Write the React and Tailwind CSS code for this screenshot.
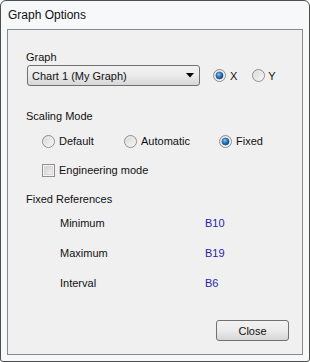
import React from "react";

function Radio({ checked }) {
  return (
    <svg width="13" height="13" viewBox="0 0 13 13" className="shrink-0">
      <defs>
        <linearGradient id="rfill" x1="0" y1="0" x2="1" y2="1">
          <stop offset="0" stopColor="#d4d4d4" />
          <stop offset="1" stopColor="#fbfbfb" />
        </linearGradient>
        <radialGradient id="rdot" cx="0.4" cy="0.35" r="0.7">
          <stop offset="0" stopColor="#8ec6f0" />
          <stop offset="0.5" stopColor="#2b78bf" />
          <stop offset="1" stopColor="#0d3f78" />
        </radialGradient>
      </defs>
      <circle cx="6.5" cy="6.5" r="6" fill="url(#rfill)" stroke="#8c8e90" strokeWidth="1" />
      <circle cx="6.5" cy="6.5" r="4.6" fill="none" stroke="#ededed" strokeWidth="0.8" />
      {checked && <circle cx="6.5" cy="6.5" r="3.6" fill="url(#rdot)" stroke="#1c4f80" strokeWidth="0.5" />}
    </svg>
  );
}

function Check() {
  return (
    <div className="w-[13px] h-[13px] shrink-0 border border-[#8e8f8f] bg-[#f4f4f4] p-[1px]">
      <div className="w-full h-full bg-gradient-to-br from-[#cfcfcf] to-[#f4f4f4] border border-[#d8d8d8]" />
    </div>
  );
}

function RadioLabel({ checked, children, gap = "gap-[4px]" }) {
  return (
    <div className={`flex items-center ${gap}`}>
      <Radio checked={checked} />
      <span>{children}</span>
    </div>
  );
}

export default function App() {
  return (
    <div
      className="w-[310px] h-[362px] bg-[#f7f8fa] border border-[#4d4d4d] rounded-t-[6px] rounded-b-[3px] flex flex-col text-[11px] text-[#111] leading-[16px]"
      style={{ fontFamily: '"Segoe UI", "Liberation Sans", Arial, sans-serif' }}
    >
      <div className="h-[28px] flex items-center pl-[7px] text-[12px]">Graph Options</div>
      <div className="mx-[6px] mb-[6px] flex-1 border border-[#878a8f] bg-[#f0f0f0] flex flex-col pl-[18px]">
        <div className="mt-[19px] h-[16px]">Graph</div>
        <div className="flex items-center h-[21px]">
          <div className="ml-[1px] w-[173px] h-[21px] border border-[#707070] rounded-[3px] bg-gradient-to-b from-[#f2f2f2] via-[#ebebeb] to-[#d6d6d6] flex items-center pl-[4px] pr-[5px] justify-between">
            <span>Chart 1 (My Graph)</span>
            <svg width="8" height="5" viewBox="0 0 8 5">
              <path d="M0 0 L8 0 L4 4.5 Z" fill="#000" />
            </svg>
          </div>
          <div className="ml-[13px]">
            <RadioLabel checked gap="gap-[4px]">X</RadioLabel>
          </div>
          <div className="ml-[15px]">
            <RadioLabel gap="gap-[3px]">Y</RadioLabel>
          </div>
        </div>
        <div className="mt-[22px] h-[16px]">Scaling Mode</div>
        <div className="mt-[9px] h-[16px] flex items-center pl-[16px]">
          <div className="w-[82px]"><RadioLabel>Default</RadioLabel></div>
          <div className="w-[95px]"><RadioLabel>Automatic</RadioLabel></div>
          <div><RadioLabel checked>Fixed</RadioLabel></div>
        </div>
        <div className="mt-[13px] h-[16px] flex items-center pl-[16px] gap-[4px]">
          <Check />
          <span>Engineering mode</span>
        </div>
        <div className="mt-[13px] h-[16px]">Fixed References</div>
        <div className="mt-[8px] h-[16px] flex pl-[34px]">
          <span className="w-[145px]">Minimum</span>
          <span className="text-[#2424a8]">B10</span>
        </div>
        <div className="mt-[14px] h-[16px] flex pl-[34px]">
          <span className="w-[145px]">Maximum</span>
          <span className="text-[#2424a8]">B19</span>
        </div>
        <div className="mt-[14px] h-[16px] flex pl-[34px]">
          <span className="w-[145px]">Interval</span>
          <span className="text-[#2424a8]">B6</span>
        </div>
        <div className="mt-[29px] flex justify-end pr-[13px]">
          <button className="w-[73px] h-[21px] border border-[#707070] rounded-[3px] bg-gradient-to-b from-[#f2f2f2] via-[#ebebeb] to-[#d6d6d6] flex items-center justify-center">
            Close
          </button>
        </div>
      </div>
    </div>
  );
}
